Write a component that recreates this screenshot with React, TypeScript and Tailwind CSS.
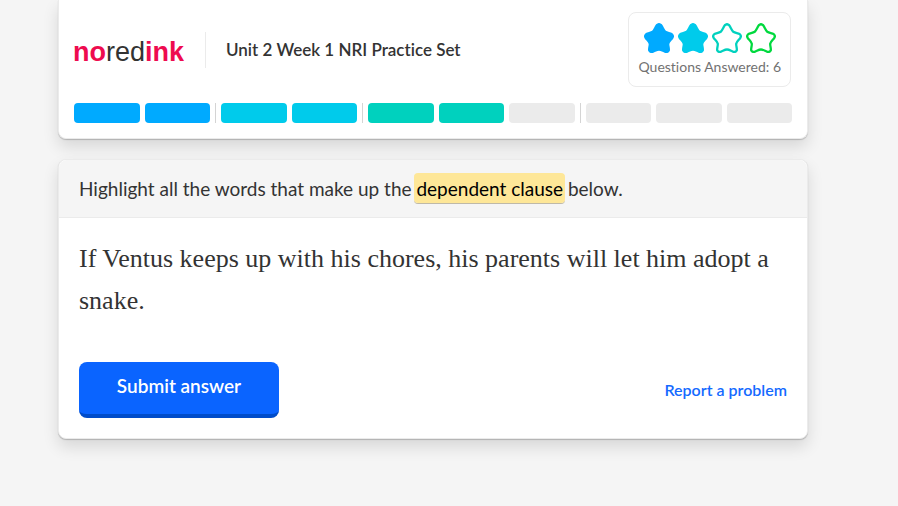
const segments: string[][] = [
  ["bg-[#00aaff]", "bg-[#00aaff]"],
  ["bg-[#00cbeb]", "bg-[#00cbeb]"],
  ["bg-[#00d1be]", "bg-[#00d1be]", "bg-[#ebebeb]"],
  ["bg-[#ebebeb]", "bg-[#ebebeb]", "bg-[#ebebeb]"],
];

const stars = [
  { color: "#00aaff", filled: true },
  { color: "#00cbeb", filled: true },
  { color: "#00d1be", filled: false },
  { color: "#00d93e", filled: false },
];

function Star({ color, filled }: { color: string; filled: boolean }) {
  return (
    <svg viewBox="0 0 30 30" className="size-[30px]" aria-hidden="true">
      <path
        d="M12.9 2.2 Q15 .2 17.1 2.2 C18.8 4.6 19.5 7 21.2 8.8 C23.2 10.2 25.6 10 27.6 11 Q29.8 12.9 28.1 15.2 C26.5 17.2 24.6 18.7 24.2 20.7 C24 22.8 25.1 25 24.8 27.3 Q23.8 29.6 21 28.6 C18.7 27.7 17.1 26.5 15 26.5 C12.9 26.5 11.3 27.7 9 28.6 Q6.2 29.6 5.2 27.3 C4.9 25 6 22.8 5.8 20.7 C5.4 18.7 3.5 17.2 1.9 15.2 Q.2 12.9 2.4 11 C4.4 10 6.8 10.2 8.8 8.8 C10.5 7 11.2 4.6 12.9 2.2Z"
        fill={filled ? color : "none"}
        stroke={color}
        strokeWidth="2.3"
        strokeLinejoin="round"
      />
    </svg>
  );
}

export default function App() {
  return (
    <main className="min-h-screen bg-[#f5f5f5] pr-[90px] pl-[58px] font-['Lato',sans-serif] text-[#333] [font-variant-ligatures:none]">
      <header className="rounded-b-lg border border-t-0 border-[#ebebeb] bg-white px-[15px] pt-3 pb-[15px] shadow-[0_1px_1px_rgba(0,0,0,0.2),0_8px_16px_rgba(0,0,0,0.12)]">
        <div className="flex items-center">
          <svg viewBox="0 0 112 36" className="h-9 w-[112px]" role="img" aria-label="noredink">
            <text x="-1" y="29" fontFamily="'Liberation Sans', sans-serif" fontSize="27">
              <tspan fill="#ee0b4f" fontWeight="700">no</tspan>
              <tspan fill="#333">red</tspan>
              <tspan fill="#ee0b4f" fontWeight="700">ink</tspan>
            </text>
          </svg>
          <h1 className="ml-[19px] flex h-9 items-center border-l border-[#ebebeb] pl-5 text-[17px] leading-5 font-semibold">
            Unit 2 Week 1 NRI Practice Set
          </h1>
          <div className="mr-px ml-auto h-[75px] rounded-lg border border-[#ebebeb] px-[9px] pt-[10px]">
            <div className="flex justify-center gap-1">
              {stars.map((s) => (
                <Star key={s.color} {...s} />
              ))}
            </div>
            <p className="mt-1 text-sm leading-5 text-[#727272]">Questions Answered: 6</p>
          </div>
        </div>
        <div className="mt-4 flex gap-[5px]">
          {segments.map((group, g) => (
            <div key={g} className="contents">
              {g > 0 && <div className="h-5 w-px bg-[#d4d4d4]" />}
              {group.map((color, i) => (
                <div key={i} className={`h-5 flex-1 rounded ${color}`} />
              ))}
            </div>
          ))}
        </div>
      </header>

      <section className="mt-5 rounded-lg border border-[#ebebeb] bg-white shadow-[0_1px_1px_rgba(0,0,0,0.2),0_8px_16px_rgba(0,0,0,0.12)]">
        <div className="rounded-t-lg border-b border-[#ebebeb] bg-[#f5f5f5] px-5 py-3">
          <p className="text-[19px] leading-[33px]">
            Highlight all the words that make up the{" "}
            <mark className="-mx-[2px] rounded bg-[#fee798] px-[2px] pt-1 pb-[3px] text-black shadow-[0_1px_0_#bfb9a8]">
              dependent clause
            </mark>{" "}
            below.
          </p>
        </div>
        <div className="p-5">
          <p className="font-['Liberation_Serif',serif] text-[26px] leading-[42px]">
            If Ventus keeps up with his chores, his parents will let him adopt a snake.
          </p>
          <div className="mt-10 flex items-center justify-between">
            <button
              type="button"
              className="h-14 w-[200px] rounded-lg border-b-4 border-[#004cc9] bg-[#0a64ff] pb-1 text-[19px] leading-6 font-semibold text-white"
            >
              Submit answer
            </button>
            <a href="#report" className="text-base font-semibold text-[#146aff]">
              Report a problem
            </a>
          </div>
        </div>
      </section>
    </main>
  );
}
